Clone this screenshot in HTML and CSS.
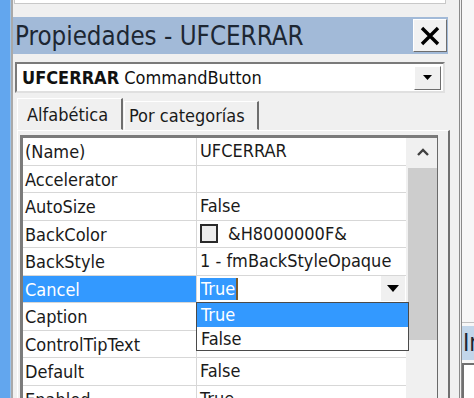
FILE: index.html
```html
<!DOCTYPE html>
<html lang="es">
  <head>
    <meta charset="UTF-8" />
    <title>Propiedades - UFCERRAR</title>
    <link rel="stylesheet" href="styles.css">
  </head>
  <body>
    <div class="app">
      <div class="sidebar"></div>

      <div class="window">
        <div class="topfield"></div>

        <div class="titlebar">
          <span class="title">Propiedades - UFCERRAR</span>
          <span class="closeBtn">
            <svg width="22" height="22" viewBox="0 0 22 22">
              <path d="M3 3 L19 19 M19 3 L3 19" stroke="#000" stroke-width="3.4" fill="none" />
            </svg>
          </span>
        </div>

        <div class="combo">
          <span class="comboText"><b>UFCERRAR</b> CommandButton</span>
          <span class="comboBtn">
            <svg width="9" height="6" viewBox="0 0 9 6"><path d="M0 0 H9 L4.5 5 Z" fill="#000" /></svg>
          </span>
        </div>

        <div class="tabs">
          <div class="tab active">Alfabética</div>
          <div class="tab">Por categorías</div>
        </div>

        <div class="panel">
          <div class="grid">
            <div class="rows">
              <div class="row"><div class="name">(Name)</div><div class="value">UFCERRAR</div></div>
              <div class="row"><div class="name">Accelerator</div><div class="value"></div></div>
              <div class="row"><div class="name">AutoSize</div><div class="value">False</div></div>
              <div class="row"><div class="name">BackColor</div><div class="value"><span class="swatch"></span>&amp;H8000000F&amp;</div></div>
              <div class="row"><div class="name">BackStyle</div><div class="value">1 - fmBackStyleOpaque</div></div>
              <div class="row selected">
                <div class="name">Cancel</div>
                <div class="value edit">
                  <span class="selText">True</span>
                  <span class="editBtn">
                    <svg width="12" height="8" viewBox="0 0 12 8"><path d="M0 0 H12 L6 7 Z" fill="#000" /></svg>
                  </span>
                  <div class="dropList">
                    <div class="option hot">True</div>
                    <div class="option">False</div>
                  </div>
                </div>
              </div>
              <div class="row"><div class="name">Caption</div><div class="value"></div></div>
              <div class="row"><div class="name">ControlTipText</div><div class="value"></div></div>
              <div class="row"><div class="name">Default</div><div class="value">False</div></div>
              <div class="row"><div class="name">Enabled</div><div class="value">True</div></div>
            </div>
            <div class="scrollbar">
              <div class="upBtn">
                <svg width="12" height="8" viewBox="0 0 12 8"><path d="M1 7 L6 2 L11 7" stroke="#404040" stroke-width="2.4" fill="none" /></svg>
              </div>
              <div class="thumb"></div>
            </div>
          </div>
        </div>
      </div>

      <div class="rightside">
        <div class="rsTop"></div>
        <div class="rsTitle">In</div>
        <div class="rsBox"></div>
      </div>
    </div>
  </body>
</html>
```

FILE: styles.css
```css
body {
  margin: 0;
  background: #f0f0f0;
  font-family: "DejaVu Sans Condensed", "DejaVu Sans", sans-serif;
  color: #1a1a1a;
  overflow: hidden;
}

.app {
  display: flex;
  height: 398px;
  width: 474px;
  overflow: hidden;
}

.sidebar {
  width: 10px;
  background: #62a6ee;
  border-right: 1px solid #9cc3ea;
  flex: none;
}

/* main properties window */
.window {
  width: 446px;
  flex: none;
  border-left: 2px solid #a9a9a9;
  border-right: 3px double #8a8a8a;
  display: flex;
  flex-direction: column;
}

.window > div {
  flex: none;
}

.topfield {
  height: 3px;
  margin: 0 13px 0 1px;
  background: #ffffff;
  border: 1px solid #c8c8c8;
  border-top: none;
}

.titlebar {
  margin-top: 13px;
  height: 37px;
  width: 435px;
  background: #a2bad8;
  display: flex;
  align-items: center;
  justify-content: space-between;
}

.title {
  font-size: 25.7px;
  color: #1d2733;
  padding-left: 2px;
}

.closeBtn {
  width: 32px;
  height: 31px;
  margin-right: 1px;
  background: #f2f2f2;
  border: 1px solid #8c8c8c;
  border-color: #ffffff #6e6e6e #6e6e6e #ffffff;
  display: flex;
  align-items: center;
  justify-content: center;
}

.combo {
  margin: 8px 0 0 2px;
  width: 426px;
  height: 27px;
  background: #ffffff;
  border: 2px solid #7a7a7a;
  border-color: #7a7a7a #e0e0e0 #e0e0e0 #7a7a7a;
  display: flex;
  align-items: center;
  justify-content: space-between;
}

.comboText {
  font-size: 18px;
  padding-left: 5px;
  color: #111;
}

.comboBtn {
  width: 25px;
  height: 22px;
  margin-right: 2px;
  background: #f0f0f0;
  border: 1px solid #ffffff;
  border-color: #ffffff #6e6e6e #6e6e6e #ffffff;
  display: flex;
  align-items: center;
  justify-content: center;
}

/* tabs */
.tabs {
  display: flex;
  margin: 5px 0 0 4px;
  height: 32px;
  align-items: flex-end;
}

.tab {
  font-size: 18px;
  height: 29px;
  line-height: 27px;
  padding: 0 8px;
  border: 1px solid #ffffff;
  border-color: #ffffff #6e6e6e transparent #ffffff;
  border-right-width: 2px;
  box-sizing: border-box;
  white-space: nowrap;
}

.tab.active {
  height: 32px;
  line-height: 31px;
  width: 106px;
  padding-left: 9px;
  background: #f0f0f0;
  position: relative;
  z-index: 1;
}

.tab:not(.active) {
  width: 135px;
  margin-left: 1px;
  padding-left: 4px;
}

.panel {
  margin-left: 4px;
  width: 428px;
  flex: 1 1 0 !important;
  min-height: 0;
  overflow: hidden;
  border-top: 1px solid #ffffff;
  border-left: 1px solid #ffffff;
  border-right: 2px solid #707070;
  padding: 4px 0 0 2px;
}

.grid {
  display: flex;
  height: 100%;
  border: 3px solid #7b7b7b;
  border-right: 1px solid #6a6a6a;
  border-bottom: none;
  background: #f0f0f0;
  width: 414px;
}

.rows {
  width: 383px;
  background: #ffffff;
}

.row {
  display: flex;
  height: 27.5px;
  box-sizing: border-box;
  border-bottom: 1px solid #d7d7d7;
  font-size: 18px;
}

.name {
  width: 171px;
  border-right: 1px solid #d7d7d7;
  padding-left: 2px;
  line-height: 28px;
  white-space: nowrap;
}

.value {
  flex: 1;
  padding-left: 3px;
  line-height: 28px;
  display: flex;
  align-items: center;
  white-space: nowrap;
}

.swatch {
  width: 14px;
  height: 15px;
  border: 2px solid #2a2a2a;
  background: #ececec;
  margin-right: 10px;
}

.row.selected .name {
  background: #3399ff;
  color: #ffffff;
}

.value.edit {
  position: relative;
  justify-content: space-between;
  padding-right: 1px;
}

.selText {
  background: #3399ff;
  color: #ffffff;
  line-height: 22px;
  padding: 0 1px;
  border-right: 2px solid #7a5a2a;
}

.editBtn {
  width: 24px;
  height: 25px;
  background: #f0f0f0;
  display: flex;
  align-items: center;
  justify-content: center;
}

/* open dropdown list */
.dropList {
  position: absolute;
  top: 26px;
  left: -1px;
  width: 211px;
  background: #ffffff;
  border: 1px solid #4a4a4a;
  z-index: 2;
}

.option {
  height: 23px;
  line-height: 23px;
  padding-left: 4px;
}

.option.hot {
  height: 24px;
  background: #3399ff;
  color: #ffffff;
}

.scrollbar {
  width: 29px;
  margin-left: 2px;
  display: flex;
  flex-direction: column;
}

.upBtn {
  height: 28px;
  display: flex;
  align-items: center;
  justify-content: center;
}

.thumb {
  height: 172px;
  background: #cdcdcd;
  margin-top: 2px;
}

/* neighbour window at the right edge */
.rightside {
  flex: 1;
  display: flex;
  flex-direction: column;
  background: #f7f7f7;
}

.rsTop {
  height: 322px;
  border-bottom: 1px solid #c0c0c0;
}

.rsTitle {
  margin-top: 3px;
  height: 34px;
  line-height: 34px;
  background: #c2d6ea;
  font-size: 24px;
  color: #1d2733;
  padding-left: 1px;
  overflow: hidden;
}

.rsBox {
  margin-top: 3px;
  flex: 1;
  background: #ffffff;
  border-top: 2px solid #707070;
  border-left: 2px solid #707070;
}
```
